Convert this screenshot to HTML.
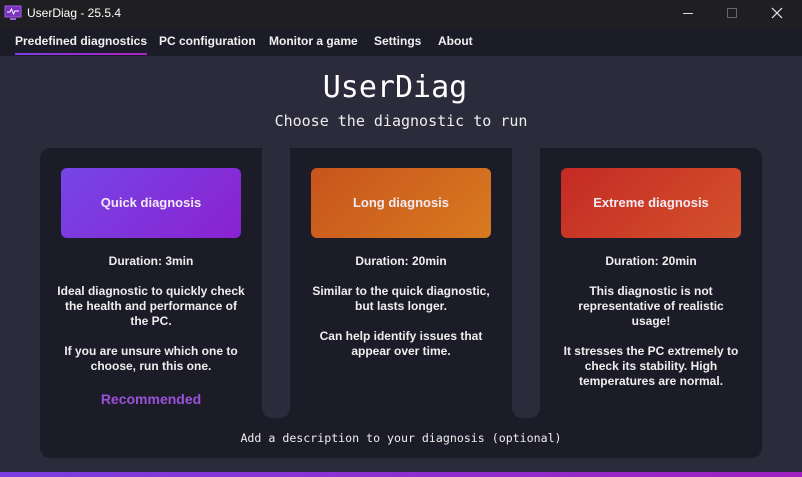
<!DOCTYPE html>
<html><head><style>
*{margin:0;padding:0;box-sizing:border-box}
body{width:802px;height:477px;background:#2b2b3b;font-family:"Liberation Sans",sans-serif;color:#eee;position:relative;overflow:hidden}
.tb{position:absolute;left:0;top:0;width:802px;height:27px;background:#1f1f22}
.nav{position:absolute;left:0;top:27px;width:802px;height:29px;background:#1c1c28}
.nav span{position:absolute;top:7px;font-size:12px;font-weight:bold;color:#f0f0f0}
.ul{position:absolute;left:15px;top:53px;width:132px;height:2px;background:linear-gradient(90deg,#7a3ee0,#b020c8)}
.panel{position:absolute;left:40px;top:148px;width:722px;height:310px;background:#1c1c28;border-radius:10px}
.gap{position:absolute;top:148px;width:28px;height:270px;background:#2b2b3b;border-radius:0 0 10px 10px}
.btn{position:absolute;top:168px;width:180px;height:70px;border-radius:6px;font-weight:bold;font-size:13px;color:#f3eaf5;text-align:center;line-height:70px}
.txt{position:absolute;top:253px;width:222px;text-align:center;font-size:12px;font-weight:bold;line-height:15px;color:#eee}
.txt p{margin-bottom:15px}
.mono{font-family:"DejaVu Sans Mono","Liberation Mono",monospace}
</style></head><body>
<div class="tb">
<svg style="position:absolute;left:4px;top:5px" width="18" height="17" viewBox="0 0 18 17"><rect x="1" y="1" width="16" height="11" fill="#7a30c0" stroke="#a060e0"/><path d="M3 7h3l1.5-3 2 5 1.5-3h4" stroke="#fff" fill="none" stroke-width="1"/><rect x="6" y="13" width="6" height="2" fill="#a060e0"/></svg>
<span style="position:absolute;left:27px;top:6px;font-size:12px;color:#fff">UserDiag - 25.5.4</span>
<div style="position:absolute;left:683px;top:13px;width:10px;height:1px;background:#ddd"></div>
<div style="position:absolute;left:727px;top:8px;width:10px;height:10px;border:1px solid #666"></div>
<svg style="position:absolute;left:771px;top:7px" width="12" height="12"><path d="M1 1L11 11M11 1L1 11" stroke="#eee" stroke-width="1.2"/></svg>
</div>
<div class="nav">
<span style="left:15px">Predefined diagnostics</span>
<span style="left:159px">PC configuration</span>
<span style="left:269px">Monitor a game</span>
<span style="left:374px">Settings</span>
<span style="left:438px">About</span>
</div>
<div class="ul"></div>
<div class="mono" style="position:absolute;left:0;width:790px;top:70px;text-align:center;font-size:30px;color:#fff">UserDiag</div>
<div class="mono" style="position:absolute;left:0;width:802px;top:112px;text-align:center;font-size:15px;color:#eee">Choose the diagnostic to run</div>
<div class="panel"></div>
<div class="gap" style="left:262px"></div>
<div class="gap" style="left:512px"></div>
<div class="btn" style="left:61px;background:linear-gradient(135deg,#7645e6,#8a22d0)">Quick diagnosis</div>
<div class="btn" style="left:311px;background:linear-gradient(135deg,#c8541c,#d87a20)">Long diagnosis</div>
<div class="btn" style="left:561px;background:linear-gradient(135deg,#c42a24,#d4522c)">Extreme diagnosis</div>
<div class="txt" style="left:40px;top:254px"><p>Duration: 3min</p><p>Ideal diagnostic to quickly check<br>the health and performance of<br>the PC.</p><p>If you are unsure which one to<br>choose, run this one.</p></div>
<div style="position:absolute;left:40px;width:222px;top:391px;text-align:center;font-size:14px;font-weight:bold;color:#9a52d8">Recommended</div>
<div class="txt" style="left:290px;top:254px"><p>Duration: 20min</p><p>Similar to the quick diagnostic,<br>but lasts longer.</p><p>Can help identify issues that<br>appear over time.</p></div>
<div class="txt" style="left:540px;top:254px"><p>Duration: 20min</p><p>This diagnostic is not<br>representative of realistic<br>usage!</p><p>It stresses the PC extremely to<br>check its stability. High<br>temperatures are normal.</p></div>
<div class="mono" style="position:absolute;left:0;width:802px;top:431px;text-align:center;font-size:11.6px;color:#eee">Add a description to your diagnosis (optional)</div>
<div style="position:absolute;left:0;top:472px;width:802px;height:5px;background:linear-gradient(90deg,#7a3ee0,#a020c0)"></div>
</body></html>
